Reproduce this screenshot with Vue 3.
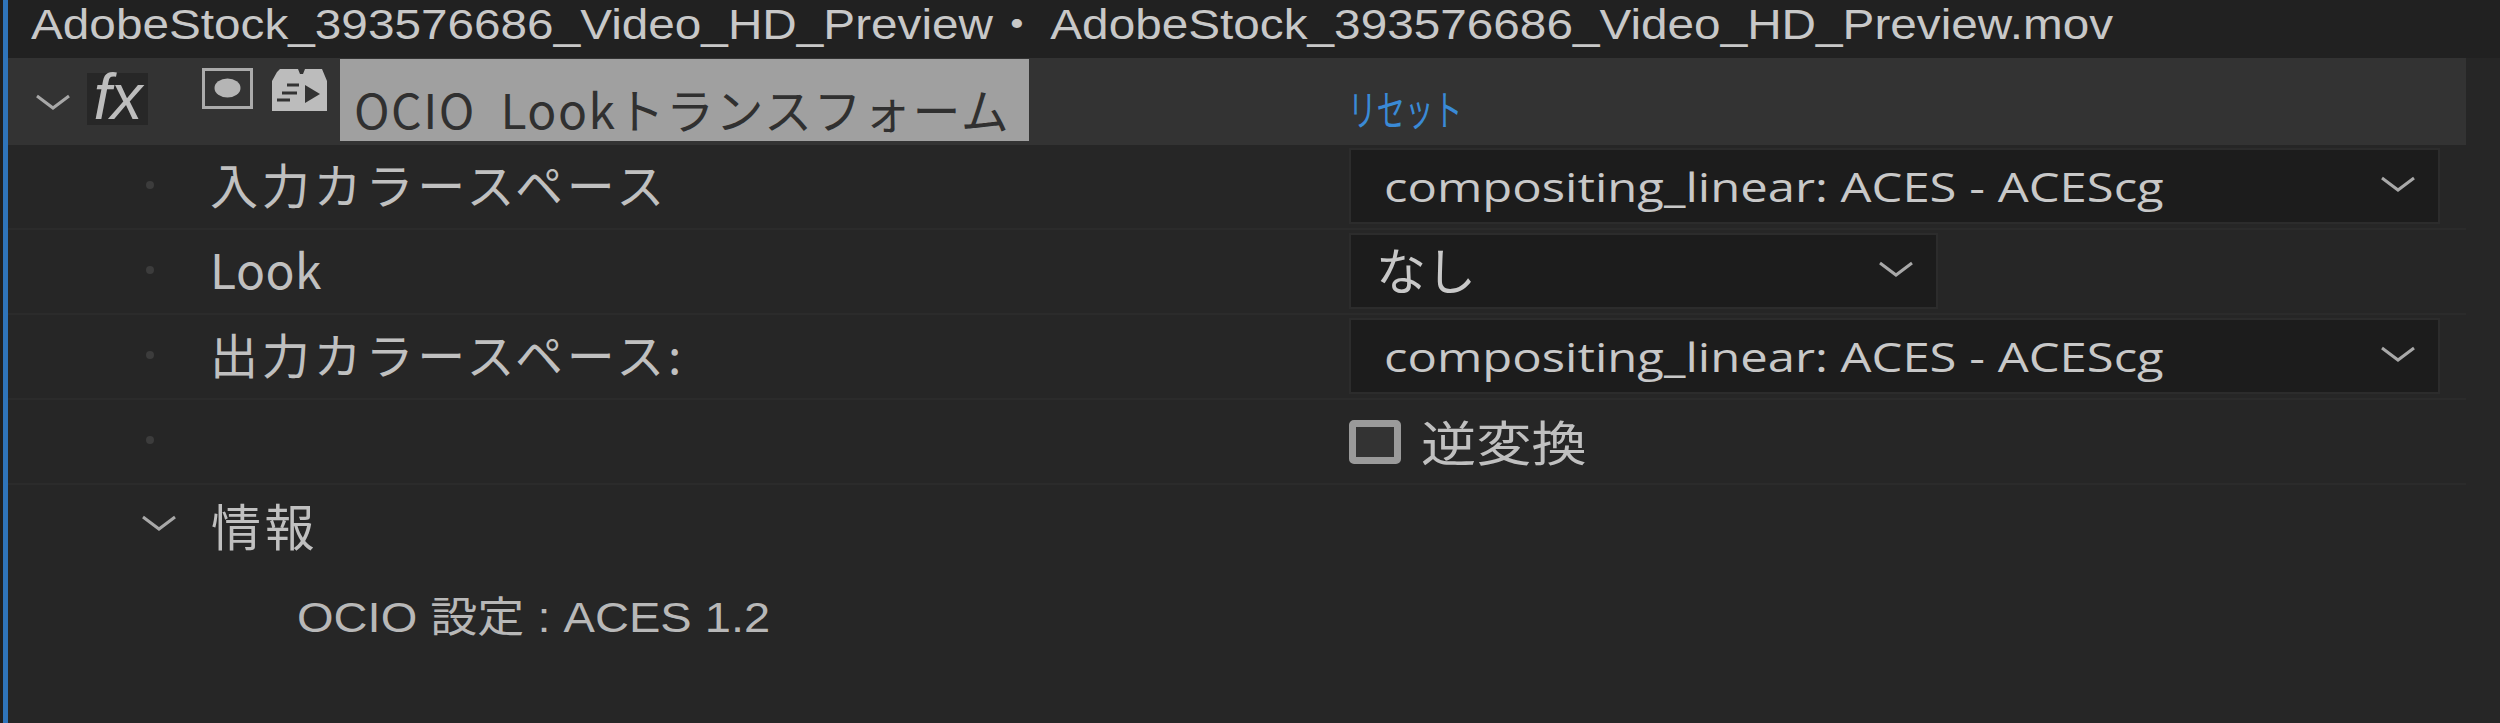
<script setup>
const rows = [
  { id: 1, label: '入力カラースペース', value: 'compositing_linear: ACES - ACEScg', kind: 'wide' },
  { id: 2, label: 'Look', value: 'なし', kind: 'short', latin: true },
  { id: 3, label: '出力カラースペース:', value: 'compositing_linear: ACES - ACEScg', kind: 'wide' },
  { id: 4, label: '', value: '逆変換', kind: 'check' }
]
</script>

<template>
  <div class="panel">
    <div class="content">
      <div class="title"><span class="title-text">AdobeStock_393576686_Video_HD_Preview・&#8201;AdobeStock_393576686_Video_HD_Preview.mov</span></div>
      <div class="header">
        <svg class="twirl" viewBox="0 0 36 20"><path d="M2 3 L18 15 L34 3" /></svg>
        <span class="fx">fx</span>
        <svg class="icon-mask" viewBox="0 0 51 41">
          <rect x="1.5" y="1.5" width="48" height="38" fill="none" stroke="#ababab" stroke-width="3" />
          <ellipse cx="25.5" cy="20" rx="13" ry="9.5" fill="#b5b5b5" />
        </svg>
        <svg class="icon-bin" viewBox="0 0 55 42">
          <path d="M0 42 V12 L5 3 L8 0 H26 L28 5 H31 L33 0 H50 L55 12 V42 Z" fill="#bcbcbc" />
          <path d="M33 16 L48 25 L33 34 Z" fill="#333" />
          <path d="M15 16 H27 M10 24 H25 M5 31 H18" stroke="#333" stroke-width="3" />
        </svg>
        <div class="name">OCIO&nbsp; Lookトランスフォーム</div>
        <a class="reset">リセット</a>
      </div>
      <div v-for="r in rows" :key="r.id" class="row">
        <span class="dot"></span>
        <span class="label" :class="{ latin: r.latin }">{{ r.label }}</span>
        <div v-if="r.kind !== 'check'" class="select" :class="r.kind">
          <span class="value" :class="{ jp: r.kind === 'short' }">{{ r.value }}</span>
          <svg class="caret" viewBox="0 0 36 20"><path d="M2 3 L18 15 L34 3" /></svg>
        </div>
        <div v-else class="check">
          <span class="box"></span>
          <span class="check-label">{{ r.value }}</span>
        </div>
      </div>
      <div class="info">
        <svg class="info-caret" viewBox="0 0 36 20"><path d="M2 3 L18 15 L34 3" /></svg>
        <span class="label">情報</span>
      </div>
      <div class="info-text"><span class="info-inner">OCIO 設定 : ACES 1.2</span></div>
    </div>
  </div>
</template>

<style>
html, body { margin: 0; background: #262626; }
</style>

<style scoped>
.panel {
  width: 2500px;
  height: 723px;
  box-sizing: border-box;
  padding-left: 3px;
  background: #1f1f1f;
  overflow: hidden;
  font-family: "Noto Sans CJK JP", "Noto Sans", sans-serif;
  color: #c4c4c4;
}
.content {
  height: 100%;
  box-sizing: border-box;
  border-left: 5px solid #2f74ba;
  background: #262626;
}
.title {
  height: 58px;
  line-height: 50px;
  padding-left: 23px;
  background: #212121;
  font-family: "Liberation Sans", "Noto Sans CJK JP", sans-serif;
  color: #c8c8c8;
  white-space: nowrap;
}
.title-text {
  display: inline-block;
  font-size: 42px;
  transform: scaleX(1.136);
  transform-origin: left;
}
.header {
  width: 2458px;
  height: 87px;
  background: #333333;
  display: flex;
  align-items: flex-start;
}
.twirl {
  flex: none;
  width: 36px;
  height: 20px;
  margin: 35px 0 0 27px;
}
.twirl path, .caret path, .info-caret path {
  fill: none;
  stroke: #a8a8a8;
  stroke-width: 3;
}
.fx {
  flex: none;
  width: 61px;
  height: 52px;
  margin: 15px 0 0 16px;
  background: #272727;
  font-family: "Liberation Sans", sans-serif;
  font-style: italic;
  font-size: 64px;
  line-height: 48px;
  letter-spacing: -1px;
  text-align: center;
  color: #bdbdbd;
}
.icon-mask {
  flex: none;
  width: 51px;
  height: 41px;
  margin: 10px 0 0 54px;
}
.icon-bin {
  flex: none;
  width: 55px;
  height: 42px;
  margin: 11px 0 0 19px;
}
.name {
  flex: none;
  width: 689px;
  height: 82px;
  margin: 1px 0 0 13px;
  padding: 20px 0 0 14px;
  box-sizing: border-box;
  background: #a0a0a0;
  color: #303030;
  font-size: 48px;
  line-height: 58px;
  letter-spacing: 1.5px;
  white-space: nowrap;
}
.reset {
  flex: none;
  margin: 20px 0 0 319px;
  color: #3a8ad6;
  font-size: 42px;
  line-height: 60px;
  transform: scaleX(0.68);
  transform-origin: left;
}
.row {
  height: 85px;
  width: 2458px;
  box-sizing: border-box;
  border-bottom: 2px solid #2b2b2b;
  display: flex;
  align-items: center;
  position: relative;
}
.dot {
  flex: none;
  width: 8px;
  height: 8px;
  border-radius: 50%;
  background: #3c3c3c;
  margin: 0 0 3px 138px;
}
.label {
  flex: none;
  margin-left: 56px;
  margin-bottom: 8px;
  width: 1139px;
  font-size: 48px;
  line-height: 60px;
  letter-spacing: 3.8px;
  color: #c0c0c0;
  white-space: nowrap;
}
.label.latin {
  letter-spacing: 0.5px;
}
.select {
  flex: none;
  height: 76px;
  align-self: flex-start;
  margin-top: 3px;
  box-sizing: border-box;
  background: #1c1c1c;
  border: 2px solid #2c2c2c;
  display: flex;
  align-items: center;
  position: relative;
}
.select.wide { width: 1091px; }
.select.short { width: 589px; }
.value {
  display: inline-block;
  margin-left: 33px;
  font-family: "Open Sans", sans-serif;
  font-size: 41px;
  transform: scaleX(1.195);
  transform-origin: left;
  color: #c8c8c8;
  white-space: nowrap;
}
.value.jp {
  font-family: "Noto Sans CJK JP", sans-serif;
  font-size: 50px;
  margin-left: 25px;
  transform: none;
  margin-bottom: 6px;
}
.caret {
  position: absolute;
  right: 22px;
  top: 25px;
  width: 36px;
  height: 20px;
}
.check {
  display: flex;
  align-items: center;
}
.box {
  width: 52px;
  height: 44px;
  box-sizing: border-box;
  border: 7px solid #9a9a9a;
  border-radius: 5px;
  background: #333333;
}
.check-label {
  display: inline-block;
  margin-left: 20px;
  margin-bottom: 4px;
  font-size: 48px;
  line-height: 60px;
  transform: scaleX(1.15);
  transform-origin: left;
  color: #c0c0c0;
}
.info {
  height: 78px;
  display: flex;
  align-items: center;
}
.info-caret {
  flex: none;
  width: 36px;
  height: 20px;
  margin-left: 133px;
}
.info .label {
  margin-left: 34px;
  margin-bottom: 0;
  font-size: 50px;
  letter-spacing: 3.5px;
}
.info-text {
  margin: 30px 0 0 289px;
  font-family: "Liberation Sans", "Noto Sans CJK JP", sans-serif;
  line-height: 50px;
  color: #b8b8b8;
}
.info-inner {
  display: inline-block;
  font-size: 42px;
  transform: scaleX(1.12);
  transform-origin: left;
}
</style>
